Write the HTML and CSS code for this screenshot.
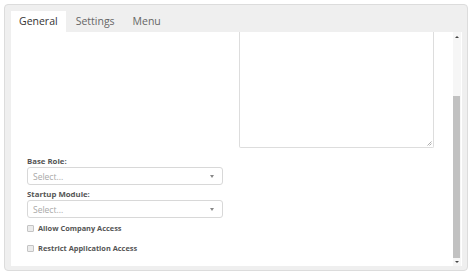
FILE: index.html
```html
<!DOCTYPE html>
<html>
<head>
<meta charset="utf-8">
<link rel="stylesheet" href="styles.css">
</head>
<body>
<div class="panel">
  <div class="tabs">
    <div class="tab active">General</div>
    <div class="tab">Settings</div>
    <div class="tab">Menu</div>
  </div>
  <div class="content">
    <div class="main">
      <div class="top-row">
        <div></div>
        <div class="textarea">
          <svg class="grip" width="5" height="5" viewBox="0 0 5 5"><path d="M4.5 0.5 L0.5 4.5 M4.5 2.5 L2.5 4.5" stroke="#999" stroke-width="0.8"/></svg>
        </div>
      </div>
      <div class="fields">
        <div class="label">Base Role:</div>
        <div class="select"><span>Select...</span><span class="caret"></span></div>
        <div class="label">Startup Module:</div>
        <div class="select"><span>Select...</span><span class="caret"></span></div>
        <div class="check"><span class="box"></span>Allow Company Access</div>
        <div class="check second"><span class="box"></span>Restrict Application Access</div>
      </div>
    </div>
    <div class="scrollbar">
      <span class="arrow up"></span>
      <div class="track"><div class="thumb"></div></div>
      <span class="arrow down"></span>
    </div>
  </div>
</div>
</body>
</html>
```
FILE: styles.css
```css
html, body {
  margin: 0;
  padding: 0;
  background: #ffffff;
  font-family: "Open Sans", "Liberation Sans", sans-serif;
}
.panel {
  margin: 4px 0 0 4px;
  width: 464px;
  height: 267px;
  box-sizing: border-box;
  border: 1px solid #dcdcdc;
  border-radius: 4px;
  background: #efefef;
  padding: 6px 5px 4px 6px;
  display: flex;
  flex-direction: column;
}
.tabs {
  display: flex;
  height: 21px;
}
.tab {
  padding: 0 8px;
  margin-right: 2px;
  font-size: 10.5px;
  line-height: 21px;
  color: #666;
}
.tab.active {
  background: #fff;
  color: #333;
}
.content {
  flex: 1;
  background: #fff;
  display: flex;
  overflow: hidden;
}
.main {
  flex: 1;
  padding-left: 16px;
}
.top-row {
  display: grid;
  grid-template-columns: 196px 195px;
  column-gap: 16px;
}
.textarea {
  position: relative;
  height: 116px;
  box-sizing: border-box;
  border: 1px solid #dddddd;
  border-top: none;
  border-radius: 0 0 2px 2px;
}
.grip {
  position: absolute;
  right: 1px;
  bottom: 1px;
}
.fields {
  width: 196px;
  padding-top: 7px;
}
.label {
  font-size: 7.8px;
  font-weight: 700;
  line-height: 12px;
  color: #555;
}
.select {
  height: 18px;
  box-sizing: border-box;
  border: 1px solid #d8d8d8;
  border-radius: 3px;
  display: flex;
  align-items: center;
  justify-content: space-between;
  padding: 0 8px 0 5px;
  font-size: 8.5px;
  color: #a8a8a8;
  margin-bottom: 3px;
}
.caret {
  width: 0;
  height: 0;
  border-left: 2.5px solid transparent;
  border-right: 2.5px solid transparent;
  border-top: 3px solid #888;
}
.check {
  display: flex;
  align-items: center;
  font-size: 7.4px;
  font-weight: 700;
  color: #555;
  line-height: 14px;
}
.check.second {
  margin-top: 6px;
}
.box {
  width: 5px;
  height: 5px;
  border: 1px solid #c4c4c4;
  background: #ececec;
  border-radius: 1px;
  margin-right: 4px;
}
.scrollbar {
  width: 8px;
  margin-right: 1px;
  background: #f6f6f6;
  display: flex;
  flex-direction: column;
  align-items: center;
}
.arrow {
  width: 0;
  height: 0;
  border-left: 2px solid transparent;
  border-right: 2px solid transparent;
}
.arrow.up {
  border-bottom: 2px solid #444;
  margin: 4px 0 0;
}
.arrow.down {
  border-top: 2px solid #444;
  margin: 3px 0 3px;
}
.track {
  flex: 1;
  width: 100%;
  display: flex;
  flex-direction: column;
  justify-content: flex-end;
}
.thumb {
  height: 162px;
  width: 7px;
  background: #c1c1c1;
}
```
